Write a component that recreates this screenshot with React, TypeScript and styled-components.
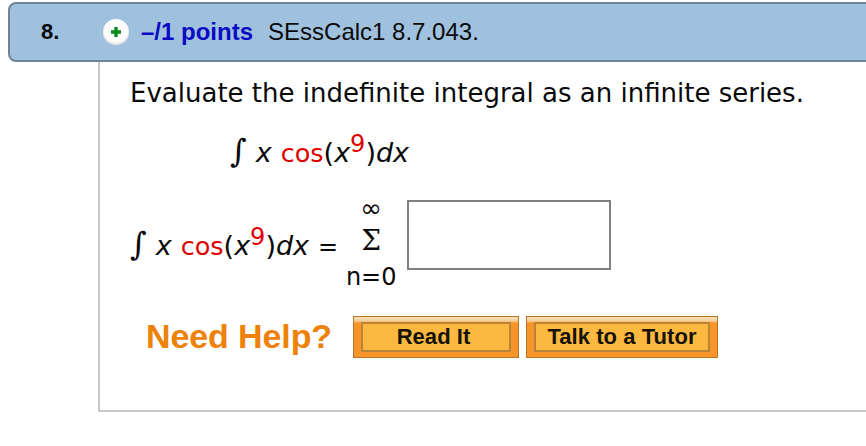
import React from 'react'
import styled, {createGlobalStyle} from 'styled-components'

const Global = createGlobalStyle`
    html, body {
        margin: 0;
        background: #fff;
        overflow: hidden;
    }
`

const Page = styled.div`
    width: 866px;
    height: 446px;
    padding-top: 2px;
    box-sizing: border-box;
    overflow: hidden;
`

const Header = styled.div`
    display: flex;
    align-items: center;
    box-sizing: border-box;
    width: 880px;
    height: 60px;
    margin-left: 8px;
    padding-left: 31px;
    background: #9fc1de;
    border: 2px solid #6d8598;
    border-radius: 8px;
    font-family: "Liberation Sans", Arial, sans-serif;
    font-size: 24px;
    color: #0a0a0a;
`

const Number = styled.span`
    width: 62px;
    font-weight: bold;
    font-size: 22px;
`

const PlusBadge = styled.span`
    display: flex;
    align-items: center;
    justify-content: center;
    width: 26px;
    height: 26px;
    margin-right: 12px;
    border-radius: 50%;
    background: radial-gradient(circle at 50% 42%, #fff 55%, #dcdcd8 82%, #b9b9b4 100%);
`

const Points = styled.span`
    margin-right: 15px;
    font-weight: bold;
    color: #0a0ac4;
`

const Panel = styled.div`
    box-sizing: border-box;
    width: 780px;
    height: 350px;
    margin-left: 98px;
    padding: 12px 0 0 30px;
    border-left: 2px solid #c8c8c8;
    border-bottom: 2px solid #c8c8c8;
    font-family: "DejaVu Sans", Verdana, sans-serif;
    color: #0a0a0a;
`

const Prompt = styled.div`
    font-size: 26px;
    line-height: 38px;
    white-space: nowrap;
`

const Formula = styled.div<{ $indent?: number }>`
    margin-left: ${props => props.$indent || 0}px;
    font-size: 27px;
    white-space: nowrap;
`

const RowFormula = styled(Formula)`
    margin-top: 2px;
`

const Integral = styled.span`
    margin-right: 9px;
    font-family: "DejaVu Serif", serif;
    font-size: 32px;
    line-height: 0;
`

const Var = styled.i`
    font-style: italic;
`

const Fn = styled.span`
    margin-left: 9px;
    font-size: 25.5px;
    color: #dd0000;
`

const Sup = styled.sup`
    font-size: 24px;
    line-height: 0;
    vertical-align: 10px;
    color: #dd0000;
`

const FirstFormula = styled.div`
    margin-top: 25px;
    height: 44px;
`

const AnswerRow = styled.div`
    display: flex;
    align-items: center;
    margin-top: 16px;
`

const Equals = styled.span`
    margin-left: 9px;
    font-size: 24px;
`

const Sum = styled.div`
    display: flex;
    flex-direction: column;
    align-items: center;
    width: 56px;
    margin-left: 5px;
    margin-right: 7.5px;
    font-size: 24px;
`

const SumTop = styled.span`
    font-size: 26px;
    line-height: 22px;
`

const SumSign = styled.span`
    font-family: "DejaVu Serif", serif;
    font-size: 28px;
    line-height: 44px;
`

const SumBottom = styled.span`
    line-height: 28px;
`

const Answer = styled.input`
    box-sizing: border-box;
    width: 204px;
    height: 70px;
    margin-top: -18px;
    border: 2px solid #808080;
    background: #fff;
    outline: none;
`

const HelpRow = styled.div`
    display: flex;
    align-items: center;
    margin-top: 25px;
    margin-left: 16px;
`

const HelpLabel = styled.span`
    width: 207px;
    margin-top: -2px;
    font-family: "Liberation Sans", Arial, sans-serif;
    font-size: 34px;
    font-weight: bold;
    letter-spacing: -0.1px;
    color: #ee8208;
`

const HelpButton = styled.div<{ $w: number }>`
    display: flex;
    box-sizing: border-box;
    width: ${props => props.$w}px;
    height: 42px;
    margin-right: 7px;
    padding: 5px 7px;
    border: 1px solid #b47429;
    background: linear-gradient(#f8e0bc 0, #f9cf96 4px, #f7952b 6px, #f7952b 100%);
`

const HelpInner = styled.div<{ $pad?: number }>`
    flex: 1;
    display: flex;
    align-items: center;
    justify-content: center;
    padding-right: ${props => props.$pad || 0}px;
    border: 2px solid #b98435;
    background: #fdb93f;
    font-family: "Liberation Sans", Arial, sans-serif;
    font-size: 22px;
    font-weight: bold;
    letter-spacing: 0.05px;
    color: #15120a;
`

const Expression = () => (
    <>
        <Integral>∫</Integral>
        <Var>x</Var>
        <Fn>cos</Fn>
        <span>(</span>
        <Var>x</Var>
        <Sup>9</Sup>
        <span>)</span>
        <Var>dx</Var>
    </>
)

export default function App() {
    return (
        <Page>
            <Global/>
            <Header>
                <Number>8.</Number>
                <PlusBadge>
                    <svg width="12" height="12" viewBox="0 0 12 12">
                        <path d="M4.3 1h3.4v3.3H11v3.4H7.7V11H4.3V7.7H1V4.3h3.3z" fill="#0a8a1e"/>
                    </svg>
                </PlusBadge>
                <Points>–/1 points</Points>
                <span>SEssCalc1 8.7.043.</span>
            </Header>
            <Panel>
                <Prompt>Evaluate the indefinite integral as an infinite series.</Prompt>
                <FirstFormula>
                    <Formula $indent={100}><Expression/></Formula>
                </FirstFormula>
                <AnswerRow>
                    <RowFormula>
                        <Expression/>
                        <Equals>=</Equals>
                    </RowFormula>
                    <Sum>
                        <SumTop>∞</SumTop>
                        <SumSign>Σ</SumSign>
                        <SumBottom>n=0</SumBottom>
                    </Sum>
                    <Answer/>
                </AnswerRow>
                <HelpRow>
                    <HelpLabel>Need Help?</HelpLabel>
                    <HelpButton $w={166}><HelpInner $pad={5}>Read It</HelpInner></HelpButton>
                    <HelpButton $w={192}><HelpInner>Talk to a Tutor</HelpInner></HelpButton>
                </HelpRow>
            </Panel>
        </Page>
    )
}
